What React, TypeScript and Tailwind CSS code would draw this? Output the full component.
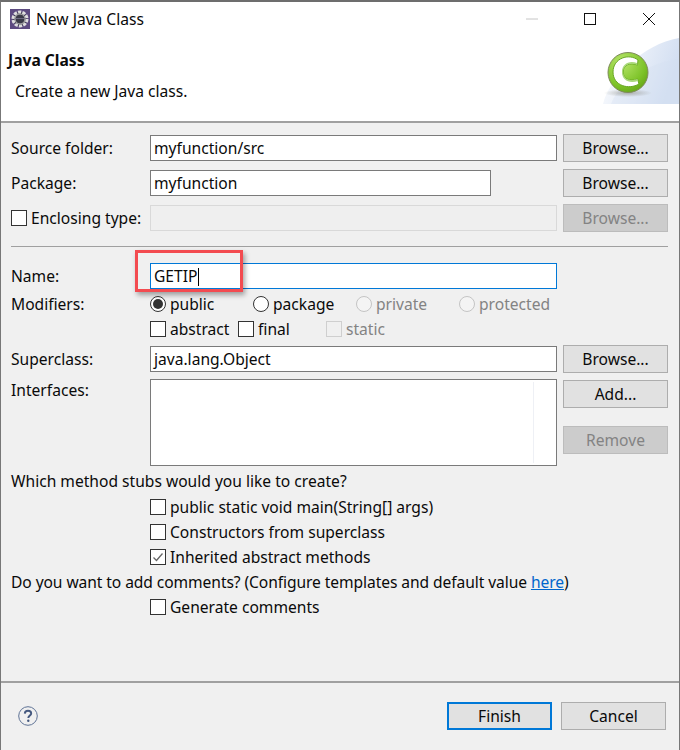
import type { ReactNode } from "react";

const font = "font-['Noto_Sans','Liberation_Sans',sans-serif]";

function Btn({ children, disabled, primary, className = "" }: { children: ReactNode; disabled?: boolean; primary?: boolean; className?: string }) {
  return (
    <div
      className={`flex h-[28px] w-[105px] shrink-0 items-center justify-center pt-[2px] text-[15.6px] ${
        disabled
          ? "border border-[#bcbcbc] bg-[#cccccc] text-[#838383]"
          : primary
            ? "border-2 border-[#0078d7] bg-[#e1e1e1] text-[#0a0a0a]"
            : "border border-[#adadad] bg-[#e1e1e1] text-[#0a0a0a]"
      } ${className}`}
    >
      {children}
    </div>
  );
}

function Input({ value, width = "w-[407px]", caret, focus, disabled }: { value?: string; width?: string; caret?: boolean; focus?: boolean; disabled?: boolean }) {
  const border = focus ? "border-[#0078d7] bg-white" : disabled ? "border-[#d9d9d9] bg-[#efefef]" : "border-[#7a7a7a] bg-white";
  return (
    <div className={`flex h-[26px] shrink-0 items-center border pl-[3px] pt-[2px] text-[15.6px] text-[#0a0a0a] ${border} ${width}`}>
      {value}
      {caret && <span className="ml-px h-[18px] w-px bg-black" />}
    </div>
  );
}

function Label({ children }: { children: ReactNode }) {
  return <div className="w-[139px] shrink-0 text-[15.6px] leading-[22px] text-[#0a0a0a]">{children}</div>;
}

function FieldRow({ label, children, button, disabled }: { label: ReactNode; children: ReactNode; button?: string; disabled?: boolean }) {
  return (
    <div className="flex h-[28px] items-center">
      <Label>{label}</Label>
      {children}
      {button && <Btn disabled={disabled} className="ml-auto">{button}</Btn>}
    </div>
  );
}

function Checkbox({ checked, disabled }: { checked?: boolean; disabled?: boolean }) {
  return (
    <span className={`flex h-[16px] w-[16px] shrink-0 items-center justify-center border ${disabled ? "border-[#cfcfcf] bg-[#f0f0f0]" : "border-[#333] bg-white"}`}>
      {checked && (
        <svg width="12" height="12" viewBox="0 0 12 12" fill="none">
          <path d="M1.5 6.5 L4.5 9.5 L10.5 2.5" stroke="#666" strokeWidth="1.3" />
        </svg>
      )}
    </span>
  );
}

function Radio({ selected, disabled }: { selected?: boolean; disabled?: boolean }) {
  return (
    <span className={`flex h-[16px] w-[16px] shrink-0 items-center justify-center rounded-full border ${disabled ? "border-[#c4c4c4] bg-[#f4f4f4]" : "border-[#333] bg-white"}`}>
      {selected && <span className="h-[10px] w-[10px] rounded-full bg-[#333]" />}
    </span>
  );
}

function Option({ kind, label, checked, disabled, width }: { kind: "check" | "radio"; label: string; checked?: boolean; disabled?: boolean; width: string }) {
  return (
    <div className={`flex items-center gap-[4px] ${width}`}>
      {kind === "check" ? <Checkbox checked={checked} disabled={disabled} /> : <Radio selected={checked} disabled={disabled} />}
      <span className={`mt-[2px] text-[15.6px] ${disabled ? "text-[#838383]" : "text-[#0a0a0a]"}`}>{label}</span>
    </div>
  );
}

function StubRow({ label, checked }: { label: string; checked?: boolean }) {
  return (
    <div className="flex h-[25px] items-center pl-[139px]">
      <Option kind="check" label={label} checked={checked} width="" />
    </div>
  );
}

function EclipseIcon() {
  return (
    <svg width="20" height="20" viewBox="0 0 20 20" className="shrink-0">
      <rect width="20" height="20" fill="#5c4a80" />
      <circle cx="10" cy="10" r="7" fill="#3e3e4c" stroke="#dedede" strokeWidth="3" strokeDasharray="3.2 1.2" />
      <circle cx="10" cy="10" r="5" fill="#3a3a48" stroke="#b8b8b8" strokeWidth="1" />
      <path d="M5.5 9.5 H14.5" stroke="#6d6a80" strokeWidth="1" />
    </svg>
  );
}

function BannerArt() {
  return (
    <svg width="76" height="66" viewBox="0 0 76 66" className="absolute right-0 top-[36px]">
      <defs>
        <linearGradient id="wedge" x1="0" y1="0" x2="1" y2="0.3">
          <stop offset="0" stopColor="#ffffff" />
          <stop offset="1" stopColor="#d3dff2" />
        </linearGradient>
        <radialGradient id="ball" cx="0.35" cy="0.25" r="0.9">
          <stop offset="0" stopColor="#b8e66c" />
          <stop offset="0.65" stopColor="#7cc227" />
          <stop offset="1" stopColor="#5c9a12" />
        </radialGradient>
        <radialGradient id="shadow" cx="0.5" cy="0.5" r="0.5">
          <stop offset="0" stopColor="#8a8a80" stopOpacity="0.6" />
          <stop offset="1" stopColor="#8a8a80" stopOpacity="0" />
        </radialGradient>
      </defs>
      <path d="M0 66 C6 40 40 6 76 0 V66 Z" fill="url(#wedge)" />
      <path d="M8 66 C18 40 50 24 76 21 V66 Z" fill="#d3dff2" opacity="0.35" />
      <ellipse cx="25" cy="55" rx="24" ry="4" fill="url(#shadow)" />
      <circle cx="25" cy="34.5" r="20" fill="url(#ball)" stroke="#7f8a5c" strokeWidth="1" />
      <path d="M35 22 C26 15 10 20 10 34 C10 48 26 52 36 46 L34.5 41 C27 44 20 41 20 34 C20 27 27 24 34.5 27 Z" fill="#ffffff" stroke="#66a620" strokeWidth="1" />
      <path d="M19 34 C19 26 26 22 34 25 L34.5 27 C27 24 20 27 20 34 C20 41 27 44 34.5 41 L35 43 C26 46 19 42 19 34 Z" fill="#a9d97a" />
    </svg>
  );
}

function HelpIcon() {
  return (
    <svg width="20" height="20" viewBox="0 0 20 20" fill="none">
      <circle cx="10" cy="10" r="9.3" stroke="#5e7295" strokeWidth="1" />
      <path d="M6.8 7.6 C6.9 5.6 8.3 4.8 10 4.8 C11.9 4.8 13.2 5.8 13.2 7.4 C13.2 9.4 10.3 9.6 10.3 12" stroke="#45597f" strokeWidth="1.9" />
      <circle cx="10.3" cy="14.8" r="1.2" fill="#45597f" />
    </svg>
  );
}

export default function App() {
  return (
    <div className={`relative flex h-[750px] w-[680px] flex-col overflow-hidden bg-[#f0f0f0] ${font}`}>
      {/* window frame */}
      <div className="flex h-full w-full flex-col border-l border-r border-t-2 border-[#777] border-t-[#6d6d6d]">
        <div className="relative flex h-[119px] flex-col bg-white">
          <div className="flex h-[36px] items-center pb-[2px] pl-[9px]">
            <EclipseIcon />
            <span className="ml-[6px] mt-[2px] text-[15.6px] text-[#0a0a0a]">New Java Class</span>
            <div className="ml-auto flex items-center">
              <svg width="175" height="16" viewBox="0 0 175 16" fill="none">
                <path d="M26 8 H38" stroke="#c6c6c6" />
                <rect x="84.5" y="2.5" width="11" height="11" stroke="#111" />
                <path d="M143 2 L155 14 M155 2 L143 14" stroke="#111" />
              </svg>
              <span className="w-[4px]" />
            </div>
          </div>
          <div className="mt-[12px] pl-[7px] text-[15.6px] font-bold leading-[20px] text-[#0a0a0a]">Java Class</div>
          <div className="mt-[11px] pl-[14px] text-[15.6px] leading-[20px] text-[#0a0a0a]">Create a new Java class.</div>
          <BannerArt />
        </div>
        <div className="h-[2px] bg-[#a0a0a0]" />

        <div className="flex flex-1 flex-col pl-[10px] pr-[11px] pt-[11px]">
          <div className="flex flex-col gap-[7px]">
            <FieldRow label="Source folder:" button="Browse...">
              <Input value="myfunction/src" />
            </FieldRow>
            <FieldRow label="Package:" button="Browse...">
              <Input value="myfunction" width="w-[341px]" />
            </FieldRow>
            <div className="flex h-[28px] items-center">
              <div className="flex w-[139px] shrink-0 items-center gap-[4px]">
                <Checkbox />
                <span className="mt-[2px] whitespace-nowrap text-[15.6px] text-[#0a0a0a]">Enclosing type:</span>
              </div>
              <Input disabled />
              <Btn disabled className="ml-auto">Browse...</Btn>
            </div>
          </div>

          <div className="mt-[14px] h-px bg-[#a0a0a0]" />

          <div className="mt-[15px]">
            <FieldRow label="Name:">
              <Input value="GETIP" caret focus />
            </FieldRow>
          </div>
          <div className="mt-[2px] flex h-[24px] items-center">
            <Label>Modifiers:</Label>
            <Option kind="radio" label="public" checked width="w-[103px]" />
            <Option kind="radio" label="package" width="w-[103px]" />
            <Option kind="radio" label="private" disabled width="w-[103px]" />
            <Option kind="radio" label="protected" disabled width="" />
          </div>
          <div className="flex h-[26px] items-center pl-[139px]">
            <Option kind="check" label="abstract" width="w-[88px]" />
            <Option kind="check" label="final" width="w-[88px]" />
            <Option kind="check" label="static" disabled width="" />
          </div>

          <div className="mt-[3px]">
            <FieldRow label="Superclass:" button="Browse...">
              <Input value="java.lang.Object" />
            </FieldRow>
          </div>

          <div className="mt-[6px] flex h-[87px]">
            <Label>Interfaces:</Label>
            <div className="relative h-[87px] w-[407px] shrink-0 border border-[#7a7a7a] bg-white">
              <div className="absolute bottom-[2px] right-[22px] top-[2px] w-px bg-[#eef0f5]" />
            </div>
            <div className="ml-auto flex flex-col pt-px">
              <Btn>Add...</Btn>
              <Btn disabled className="mt-[18px]">Remove</Btn>
            </div>
          </div>

          <div className="mt-[3px] flex h-[25px] items-center text-[15.6px] text-[#0a0a0a]">Which method stubs would you like to create?</div>
          <StubRow label="public static void main(String[] args)" />
          <StubRow label="Constructors from superclass" />
          <StubRow label="Inherited abstract methods" checked />
          <div className="flex h-[25px] items-center pt-[2px] text-[15.6px] tracking-[-0.08px] text-[#0a0a0a]">
            Do you want to add comments? (Configure templates and default value&nbsp;
            <span className="text-[#0066cc] underline">here</span>)
          </div>
          <StubRow label="Generate comments" />
        </div>

        <div className="h-[2px] bg-[#a0a0a0]" />
        <div className="flex h-[67px] items-center pb-[1px] pl-[17px] pr-[13px]">
          <HelpIcon />
          <Btn primary className="ml-auto">Finish</Btn>
          <Btn className="ml-[9px]">Cancel</Btn>
        </div>
      </div>

      {/* red annotation drawn over the screenshot */}
      <div className="absolute left-[135px] top-[250px] h-[42px] w-[108px] border-[3px] border-[#f34b50] shadow-[2px_3px_5px_rgba(0,0,0,0.35)]" />
    </div>
  );
}
